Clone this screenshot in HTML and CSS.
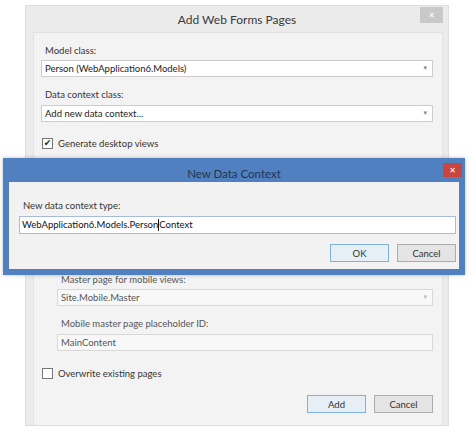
FILE: index.html
```html
<!DOCTYPE html>
<html>
<head>
<meta charset="utf-8">
<link rel="stylesheet" href="styles.css">
</head>
<body>
<div class="dialog">
  <div class="titlebar">
    <span class="title">Add Web Forms Pages</span>
    <span class="close gray">&#x2715;</span>
  </div>
  <div class="panel">
    <div class="label l1">Model class:</div>
    <div class="combo">Person (WebApplication6.Models)<span class="arrow">&#x25BE;</span></div>
    <div class="label l2">Data context class:</div>
    <div class="combo">Add new data context...<span class="arrow">&#x25BE;</span></div>
    <div class="check c1"><span class="box checked">&#x2714;</span>Generate desktop views</div>
    <div class="hidden-area"></div>
    <div class="label sub l3">Master page for mobile views:</div>
    <div class="combo sub disabled">Site.Mobile.Master<span class="arrow">&#x25BE;</span></div>
    <div class="label sub l4">Mobile master page placeholder ID:</div>
    <div class="combo sub disabled">MainContent</div>
    <div class="check c2"><span class="box"></span>Overwrite existing pages</div>
    <div class="buttons">
      <button class="btn default">Add</button>
      <button class="btn">Cancel</button>
    </div>
  </div>
</div>

<div class="popup">
  <div class="ptitlebar">
    <span class="ptitle">New Data Context</span>
    <span class="close red">&#x2715;</span>
  </div>
  <div class="ppanel">
    <div class="plabel">New data context type:</div>
    <div class="pinput">WebApplication6.Models.Person<span class="caret"></span>Context</div>
    <div class="pbuttons">
      <button class="btn default">OK</button>
      <button class="btn">Cancel</button>
    </div>
  </div>
</div>
</body>
</html>
```
FILE: styles.css
```css
html, body {
  margin: 0;
  padding: 0;
  background: #ffffff;
  width: 474px;
  height: 432px;
  overflow: hidden;
  font-family: Lato, "Noto Sans", sans-serif;
  font-size: 9.5px;
  color: #333;
}

.dialog {
  margin: 5px 0 0 25px;
  width: 424px;
  height: 421px;
  box-sizing: border-box;
  background: #ebebeb;
  border: 1px solid #dedede;
  display: flex;
  flex-direction: column;
}

.titlebar {
  height: 26px;
  position: relative;
  display: flex;
  align-items: center;
  justify-content: center;
}

.title {
  font-size: 12px;
  color: #3a3a3a;
  margin-top: 1px;
}

.close {
  position: absolute;
  display: flex;
  align-items: center;
  justify-content: center;
  color: #fff;
  font-size: 8px;
  font-weight: bold;
  font-family: "DejaVu Sans", sans-serif;
}

.close.gray {
  right: 5px;
  top: 1px;
  width: 23px;
  height: 16px;
  background: #c9c9c9;
}

.panel {
  margin: 0 5px 0 7px;
  flex: 1;
  background: #f3f3f3;
  border: 1px solid #e2e2e2;
  border-bottom: none;
  padding: 0 9px 0 7px;
  display: flex;
  flex-direction: column;
}

.label {
  padding-left: 4px;
  height: 14px;
  line-height: 14px;
  color: #333;
}

.l1 { margin-top: 11px; margin-bottom: 2px; }
.l2 { margin-top: 11px; margin-bottom: 3px; }

.combo {
  height: 17px;
  box-sizing: border-box;
  border: 1px solid #cdcdcd;
  background: #fff;
  padding-left: 3px;
  line-height: 15px;
  position: relative;
  color: #222;
}

.arrow {
  position: absolute;
  right: 5px;
  top: 0;
  font-size: 7px;
  color: #888;
  font-family: "DejaVu Sans", sans-serif;
}

.combo.disabled {
  background: #f8f8f8;
  color: #555;
  border-color: #d8d8d8;
}

.combo.disabled .arrow { color: #bbb; }

.sub {
  margin-left: 16px;
}

.label.sub { margin-left: 16px; color: #555; }

.check {
  display: flex;
  align-items: center;
  height: 12px;
  color: #333;
  padding-left: 1px;
}

.c1 { margin-top: 15px; }

.box {
  width: 11px;
  height: 11px;
  box-sizing: border-box;
  border: 1px solid #777;
  background: #fff;
  margin-right: 5px;
  font-size: 9px;
  line-height: 9px;
  text-align: center;
  color: #222;
  font-family: "DejaVu Sans", sans-serif;
}

.hidden-area {
  height: 124px;
}

.l3 { margin-top: 0; margin-bottom: 2px; }
.l4 { margin-top: 11px; margin-bottom: 3px; }

.c2 { margin-top: 16px; }

.buttons {
  margin-top: 16px;
  display: flex;
  justify-content: flex-end;
  gap: 8px;
}

.btn {
  width: 59px;
  height: 18px;
  box-sizing: border-box;
  border: 1px solid #acacac;
  background: #e4e4e4;
  font-family: Lato, "Noto Sans", sans-serif;
  font-size: 9.5px;
  color: #333;
  padding: 0;
  margin: 0;
}

.btn.default {
  border-color: #7fb0e0;
  background: #e6eef6;
}

.popup {
  position: absolute;
  left: 3px;
  top: 158px;
  width: 462px;
  height: 117px;
  box-sizing: border-box;
  background: #5080c0;
  padding: 0 6px 6px 6px;
  display: flex;
  flex-direction: column;
  box-shadow: 0 0 4px rgba(0,0,0,0.25);
}

.ptitlebar {
  height: 24px;
  position: relative;
  display: flex;
  align-items: center;
  justify-content: center;
}

.ptitle {
  font-size: 11.5px;
  color: #1f3550;
  margin-top: 6px;
}

.close.red {
  right: -3px;
  top: 5px;
  width: 19px;
  height: 14px;
  background: #c9453f;
}

.ppanel {
  flex: 1;
  background: #f2f2f2;
  padding: 0 3px 0 10px;
  display: flex;
  flex-direction: column;
}

.plabel {
  margin-top: 17px;
  padding-left: 4px;
  height: 14px;
  line-height: 14px;
  color: #333;
}

.pinput {
  margin-top: 3px;
  height: 18px;
  box-sizing: border-box;
  border: 1px solid #a6bcd8;
  background: #fff;
  padding-left: 2px;
  line-height: 16px;
  color: #111;
  display: flex;
  align-items: center;
}

.caret {
  width: 1px;
  height: 12px;
  background: #111;
}

.pbuttons {
  margin-top: 10px;
  display: flex;
  justify-content: flex-end;
  gap: 8px;
}
```
